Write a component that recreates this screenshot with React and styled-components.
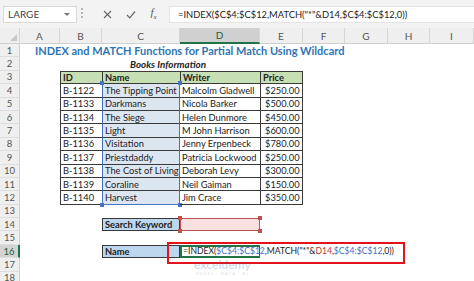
import React from 'react';
import styled, { createGlobalStyle, css } from 'styled-components';

const COLS = '20px 40px 42px 78px 80px 43px 42px 43px 42px 1fr';
const ROW_H = '13.4px';

const Global = createGlobalStyle`
  html, body { margin: 0; padding: 0; background: #fff; }
  body {
    width: 474px; height: 281px; overflow: hidden;
    font-family: Lato, "Noto Sans", sans-serif;
    color: #222;
  }
  * { box-sizing: border-box; }
`;

const Page = styled.div`
  display: flex;
  flex-direction: column;
  width: 474px;
  height: 281px;
  overflow: hidden;
`;

/* ---------- formula bar ---------- */
const TopBar = styled.div`
  flex-shrink: 0;
  height: 28px;
  background: #f3f3f3;
  display: flex;
  align-items: center;
  padding-left: 3px;
`;

const NameBox = styled.div`
  width: 74px;
  height: 17px;
  background: #fff;
  border: 1px solid #d9d9d9;
  display: flex;
  align-items: center;
  justify-content: space-between;
  padding: 0 6px 0 4px;
  font-size: 10px;
  color: #444;
`;

const Caret = styled.span`
  width: 0; height: 0;
  border-left: 3px solid transparent;
  border-right: 3px solid transparent;
  border-top: 3px solid #777;
`;

const Dots = styled.div`
  width: 2px;
  height: 12px;
  margin-left: 4px;
  background: repeating-linear-gradient(#b5b5b5 0 2px, transparent 2px 4px);
`;

const IconBtn = styled.div`
  width: 23px;
  display: flex;
  align-items: center;
  justify-content: center;
  color: #666;
`;

const Fx = styled.span`
  font-family: "Liberation Serif", serif;
  font-style: italic;
  font-size: 11px;
  color: #555;
  sub { font-size: 7px; }
`;

const FormulaInput = styled.div`
  flex: 1;
  height: 17px;
  margin-left: 4px;
  background: #fff;
  border: 1px solid #e3e3e3;
  border-right: none;
  display: flex;
  align-items: center;
  padding-left: 8px;
  font-size: 9.35px;
  color: #222;
  white-space: nowrap;
`;

/* ---------- sheet ---------- */
const Sheet = styled.div`
  flex-shrink: 0;
  display: flex;
  flex-direction: column;
`;

const Row = styled.div`
  flex-shrink: 0;
  display: grid;
  grid-template-columns: ${COLS};
  height: ${p => (p.$head ? '16px' : ROW_H)};
`;

const Corner = styled.div`
  background: #efefef;
  border-right: 1px solid #d4d4d4;
  border-bottom: 1px solid #cfcfcf;
  position: relative;
  &::after {
    content: '';
    position: absolute;
    right: 2px; bottom: 2px;
    border-left: 7px solid transparent;
    border-bottom: 7px solid #c9c9c9;
  }
`;

const ColHead = styled.div`
  background: ${p => (p.$active ? '#d0d0d0' : '#efefef')};
  border-right: 1px solid #d6d6d6;
  border-bottom: ${p => (p.$active ? '2px solid #217346' : '1px solid #cfcfcf')};
  display: flex;
  align-items: center;
  justify-content: center;
  font-size: 10px;
  color: ${p => (p.$active ? '#1e5e3a' : '#555')};
`;

const RowHead = styled.div`
  background: ${p => (p.$active ? '#d3d3d3' : '#efefef')};
  border-right: ${p => (p.$active ? '2px solid #217346' : '1px solid #d0d0d0')};
  border-bottom: 1px solid #dedede;
  display: flex;
  align-items: center;
  justify-content: center;
  font-size: 9.5px;
  color: ${p => (p.$active ? '#1e5e3a' : '#555')};
`;

const Cell = styled.div`
  position: relative;
  display: flex;
  align-items: center;
  padding: 0 2px;
  font-size: 9.3px;
  white-space: nowrap;
  overflow: visible;
`;

const Title = styled(Cell)`
  grid-column: 2 / -1;
  padding-left: 15px;
  font-size: 11px;
  font-weight: 700;
  color: #2e75b6;
`;

const Caption = styled(Cell)`
  grid-column: 3 / 6;
  padding-left: 70px;
  font-weight: 700;
  font-style: italic;
  font-size: 9.8px;
`;

const T = styled(Cell)`
  border-bottom: 1px solid #3a3a3a;
  border-left: ${p => (p.$noLeft ? 'none' : '1px solid #3a3a3a')};
  ${p => p.$last && css`border-right: 1px solid #3a3a3a;`}
  ${p => p.$top && css`border-top: 1px solid #3a3a3a;`}
  ${p => p.$hd && css`
    background: #c6e0b4;
    font-weight: 700;
  `}
  ${p => p.$sel && css`
    background: #dce6f1;
    border-left: 1px solid #4472c4;
    border-right: 1px solid #4472c4;
    border-bottom: 1px solid ${p.$selEnd ? '#4472c4' : '#3a3a3a'};
  `}
  ${p => p.$money && css`justify-content: space-between; padding: 0 5px 0 4px;`}
`;

const Handle = styled.span`
  position: absolute;
  width: 4px;
  height: 4px;
  background: ${p => p.$c};
  ${p => (p.$r ? 'right: -3px;' : 'left: -3px;')}
  ${p => (p.$b ? 'bottom: -3px;' : 'top: -3px;')}
`;

const Label = styled(Cell)`
  grid-column: 4 / 5;
  background: #bdd7ee;
  border: 1px solid #3a3a3a;
  font-weight: 700;
`;

const KeywordInput = styled(Cell)`
  grid-column: 5 / 6;
  background: #f9e1e1;
  border: 1px solid #c0504d;
`;

/* active cell D16: the formula spills over the empty cells to its right */
const Active = styled.div`
  grid-column: 5 / -1;
  position: relative;
  padding-left: 3px;
  font-size: 8.6px;
  line-height: 13.4px;
  white-space: nowrap;
`;

const ActiveFrame = styled.div`
  position: absolute;
  left: 0;
  top: 0;
  width: 80px;
  height: 100%;
  border: 2px solid #217346;
  border-right-width: 1px;
  pointer-events: none;
`;

const FormulaText = styled.span`
  position: relative;
  z-index: 1;
`;

const Ref = styled.span`
  color: ${p => p.$c};
`;

const Annotation = styled.div`
  position: absolute;
  left: -13px;
  top: -3px;
  width: 238px;
  height: 22px;
  border: 2px solid #e3121b;
  pointer-events: none;
`;

const Watermark = styled.div`
  position: absolute;
  left: 14px;
  top: 14px;
  display: flex;
  flex-direction: column;
  align-items: center;
  opacity: 0.22;
  color: #3f6fa8;
  line-height: 1;
`;

const WmName = styled.span`
  font-size: 12px;
  font-weight: 700;
`;

const WmTag = styled.span`
  font-size: 4.5px;
  letter-spacing: 1px;
  color: #666;
  margin-top: 1px;
`;

const books = [
  ['B-1122', 'The Tipping Point', 'Malcolm Gladwell', '250.00'],
  ['B-1133', 'Darkmans', 'Nicola Barker', '500.00'],
  ['B-1134', 'The Siege', 'Helen Dunmore', '450.00'],
  ['B-1135', 'Light', 'M John Harrison', '600.00'],
  ['B-1136', 'Visitation', 'Jenny Erpenbeck', '780.00'],
  ['B-1137', 'Priestdaddy', 'Patricia Lockwood', '250.00'],
  ['B-1138', 'The Cost of Living', 'Deborah Levy', '300.00'],
  ['B-1139', 'Coraline', 'Neil Gaiman', '150.00'],
  ['B-1140', 'Harvest', 'Jim Crace', '350.00'],
];

const Empty = () => <Cell />;

export default function App() {
  const letters = ['A', 'B', 'C', 'D', 'E', 'F', 'G', 'H', 'I'];
  return (
    <Page>
      <Global />
      <TopBar>
        <NameBox>LARGE<Caret /></NameBox>
        <Dots />
        <IconBtn style={{ marginLeft: 13 }}>
          <svg width="9" height="9" viewBox="0 0 9 9"><path d="M1 1 L8 8 M8 1 L1 8" stroke="#666" strokeWidth="1.1" /></svg>
        </IconBtn>
        <IconBtn>
          <svg width="10" height="9" viewBox="0 0 10 9"><path d="M1 5 L3.8 7.8 L9 1.5" stroke="#666" strokeWidth="1.2" fill="none" /></svg>
        </IconBtn>
        <IconBtn><Fx>f<sub>x</sub></Fx></IconBtn>
        <FormulaInput>=INDEX($C$4:$C$12,MATCH("*"&amp;D14,$C$4:$C$12,0))</FormulaInput>
      </TopBar>
      <Sheet>
        <Row $head>
          <Corner />
          {letters.map(l => <ColHead key={l} $active={l === 'D'}>{l}</ColHead>)}
        </Row>
        <Row>
          <RowHead>1</RowHead>
          <Title>INDEX and MATCH Functions for Partial Match Using Wildcard</Title>
        </Row>
        <Row>
          <RowHead>2</RowHead>
          <Empty />
          <Caption>Books Information</Caption>
        </Row>
        <Row>
          <RowHead>3</RowHead>
          <Empty />
          <T $hd $top>ID</T>
          <T $hd $top>Name</T>
          <T $hd $top>Writer</T>
          <T $hd $top $last>Price</T>
        </Row>
        {books.map(([id, name, writer, price], i) => (
          <Row key={id}>
            <RowHead>{i + 4}</RowHead>
            <Empty />
            <T>{id}</T>
            <T $sel $selEnd={i === books.length - 1}>
              {name}
              {i === 0 && <><Handle $c="#4472c4" /><Handle $c="#4472c4" $r /></>}
              {i === books.length - 1 && <><Handle $c="#4472c4" $b /><Handle $c="#4472c4" $r $b /></>}
            </T>
            <T $noLeft>{writer}</T>
            <T $last $money><span>$</span><span>{price}</span></T>
          </Row>
        ))}
        <Row>
          <RowHead>13</RowHead>
        </Row>
        <Row>
          <RowHead>14</RowHead>
          <Empty /><Empty />
          <Label>Search Keyword</Label>
          <KeywordInput>
            <Handle $c="#c0504d" /><Handle $c="#c0504d" $r />
            <Handle $c="#c0504d" $b /><Handle $c="#c0504d" $r $b />
          </KeywordInput>
        </Row>
        <Row>
          <RowHead>15</RowHead>
        </Row>
        <Row>
          <RowHead $active>16</RowHead>
          <Empty /><Empty />
          <Label>Name</Label>
          <Active>
            <ActiveFrame />
            <FormulaText>
              =INDEX(<Ref $c="#4472c4">$C$4:$C$12</Ref>,MATCH("*"&amp;<Ref $c="#c0392b">D14</Ref>,<Ref $c="#4472c4">$C$4:$C$12</Ref>,0))
            </FormulaText>
            <Annotation />
            <Watermark><WmName>exceldemy</WmName><WmTag>EXCEL · DATA · BI</WmTag></Watermark>
          </Active>
        </Row>
        <Row>
          <RowHead>17</RowHead>
        </Row>
        <Row>
          <RowHead>18</RowHead>
        </Row>
      </Sheet>
    </Page>
  );
}
